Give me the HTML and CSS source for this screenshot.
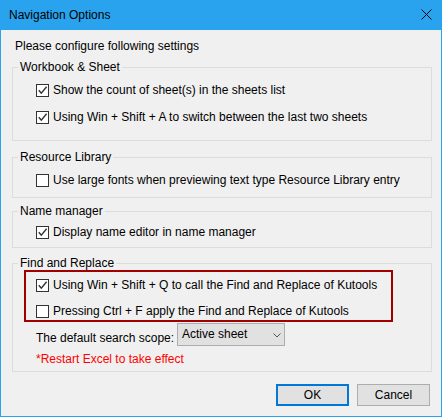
FILE: index.html
```html
<!DOCTYPE html>
<html>
<head>
<meta charset="utf-8">
<title>Navigation Options</title>
<link rel="stylesheet" href="styles.css">
</head>
<body>
<div class="window">
  <div class="titlebar">
    <span class="title">Navigation Options</span>
    <svg class="close" width="11" height="11" viewBox="0 0 11 11"><path d="M0.5 0.5L10.5 10.5M10.5 0.5L0.5 10.5" stroke="#000" stroke-width="1" fill="none"/></svg>
  </div>
  <div class="content">
    <div class="intro">Please configure following settings</div>

    <fieldset class="group group-workbook">
      <legend>Workbook &amp; Sheet</legend>
      <div class="group-body">
        <div class="row"><span class="cb"><svg width="11" height="11" viewBox="0 0 11 11"><polyline points="1.8,5.2 4.3,8.2 9.6,1.8" fill="none" stroke="#333" stroke-width="1.4"/></svg></span><span>Show the count of sheet(s) in the sheets list</span></div>
        <div class="row"><span class="cb"><svg width="11" height="11" viewBox="0 0 11 11"><polyline points="1.8,5.2 4.3,8.2 9.6,1.8" fill="none" stroke="#333" stroke-width="1.4"/></svg></span><span>Using Win + Shift + A to switch between the last two sheets</span></div>
      </div>
    </fieldset>

    <fieldset class="group group-resource">
      <legend>Resource Library</legend>
      <div class="group-body">
        <div class="row"><span class="cb"></span><span>Use large fonts when previewing text type Resource Library entry</span></div>
      </div>
    </fieldset>

    <fieldset class="group group-name">
      <legend>Name manager</legend>
      <div class="group-body">
        <div class="row"><span class="cb"><svg width="11" height="11" viewBox="0 0 11 11"><polyline points="1.8,5.2 4.3,8.2 9.6,1.8" fill="none" stroke="#333" stroke-width="1.4"/></svg></span><span>Display name editor in name manager</span></div>
      </div>
    </fieldset>

    <fieldset class="group group-find">
      <legend>Find and Replace</legend>
      <div class="group-body">
        <div class="highlight">
          <div class="row"><span class="cb"><svg width="11" height="11" viewBox="0 0 11 11"><polyline points="1.8,5.2 4.3,8.2 9.6,1.8" fill="none" stroke="#333" stroke-width="1.4"/></svg></span><span>Using Win + Shift + Q to call the Find and Replace of Kutools</span></div>
          <div class="row"><span class="cb"></span><span>Pressing Ctrl + F apply the Find and Replace of Kutools</span></div>
        </div>
        <div class="scope-row">
          <span class="scope-label">The default search scope:</span>
          <div class="select">
            <span>Active sheet</span>
            <svg class="chevron" width="8" height="5" viewBox="0 0 8 5"><polyline points="0.5,0.5 4,4 7.5,0.5" fill="none" stroke="#555" stroke-width="1"/></svg>
          </div>
        </div>
        <div class="note">*Restart Excel to take effect</div>
      </div>
    </fieldset>

    <div class="buttons">
      <button class="btn btn-default">OK</button>
      <button class="btn">Cancel</button>
    </div>
  </div>
</div>
</body>
</html>
```

FILE: styles.css
```css
* {
  box-sizing: border-box;
}

body {
  margin: 0;
  font-family: "Liberation Sans", Arial, sans-serif;
  font-size: 12px;
  color: #000;
  background: #fff;
}

.window {
  width: 442px;
  height: 417px;
  border: 1px solid #2aa3ef;
  border-top: 0;
  background: #f0f0f0;
  display: flex;
  flex-direction: column;
}

.titlebar {
  height: 30px;
  margin: 0 -1px;
  background: #2aa3ef;
  display: flex;
  align-items: center;
  justify-content: space-between;
  padding: 0 10px 0 9px;
  line-height: 16px;
}

.close {
  display: block;
  margin-top: -1px;
}

.content {
  padding: 8px 9px 0 11px;
  line-height: 16px;
}

.intro {
  margin-left: 3px;
}

.group {
  margin: 0;
  padding: 0;
  min-width: 0;
  border: 1px solid #dcdcdc;
}

.group legend {
  margin-left: 5px;
  padding: 0 2px;
  line-height: 16px;
}

.group-body {
  display: flex;
  flex-direction: column;
  padding-left: 23px;
}

.group-workbook {
  margin-top: 5px;
}

.group-workbook .group-body {
  padding-top: 7px;
  padding-bottom: 15px;
  gap: 11px;
}

.group-resource {
  margin-top: 8px;
}

.group-resource .group-body {
  padding-top: 7px;
  padding-bottom: 9px;
}

.group-name {
  margin-top: 5px;
}

.group-name .group-body {
  padding-top: 5px;
  padding-bottom: 7px;
}

.group-find {
  margin-top: 7px;
}

.group-find .group-body {
  padding-top: 0;
  padding-bottom: 4px;
}

.row {
  display: flex;
  align-items: center;
  gap: 4px;
  height: 16px;
  white-space: nowrap;
}

.cb {
  flex: none;
  width: 13px;
  height: 13px;
  border: 1px solid #333;
  background: #fff;
  display: flex;
}

.cb svg {
  display: block;
}

.highlight {
  margin: -1px 0 0 -12px;
  width: 369px;
  border: 2px solid #a00000;
  padding: 5px 0 1px 10px;
  display: flex;
  flex-direction: column;
  gap: 10px;
}

.scope-row {
  display: flex;
  align-items: flex-start;
  margin-top: 1px;
}

.scope-label {
  width: 141px;
  padding-top: 7px;
}

.select {
  width: 108px;
  height: 23px;
  border: 1px solid #adadad;
  background: #e1e1e1;
  padding: 2px 0 0 4px;
  display: flex;
  justify-content: space-between;
  align-items: flex-start;
}

.chevron {
  display: block;
  margin: 7px 3px 0 0;
}

.note {
  color: #f00;
  margin-top: 5px;
}

.buttons {
  display: flex;
  justify-content: flex-end;
  gap: 8px;
  margin-top: 12px;
  padding-right: 2px;
}

.btn {
  width: 73px;
  height: 22px;
  border: 1px solid #adadad;
  background: #e1e1e1;
  font: inherit;
  color: #000;
  padding: 0;
}

.btn-default {
  border: 2px solid #0078d7;
}
```
